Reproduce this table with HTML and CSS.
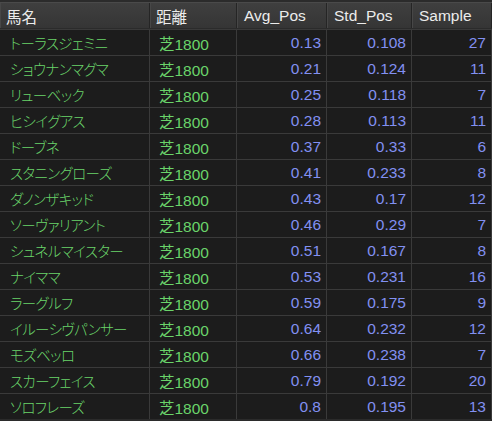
FILE: index.html
```html
<!DOCTYPE html>
<html lang="ja">
<head>
<meta charset="utf-8">
<link rel="stylesheet" href="styles.css">
</head>
<body>
<div class="grid">
  <div class="h">馬名</div><div class="h">距離</div><div class="h lat">Avg_Pos</div><div class="h lat">Std_Pos</div><div class="h lat">Sample</div>

  <div class="c name">トーラスジェミニ</div><div class="c dist">芝1800</div><div class="c num">0.13</div><div class="c num">0.108</div><div class="c num">27</div>
  <div class="c name">ショウナンマグマ</div><div class="c dist">芝1800</div><div class="c num">0.21</div><div class="c num">0.124</div><div class="c num">11</div>
  <div class="c name">リューベック</div><div class="c dist">芝1800</div><div class="c num">0.25</div><div class="c num">0.118</div><div class="c num">7</div>
  <div class="c name">ヒシイグアス</div><div class="c dist">芝1800</div><div class="c num">0.28</div><div class="c num">0.113</div><div class="c num">11</div>
  <div class="c name">ドーブネ</div><div class="c dist">芝1800</div><div class="c num">0.37</div><div class="c num">0.33</div><div class="c num">6</div>
  <div class="c name">スタニングローズ</div><div class="c dist">芝1800</div><div class="c num">0.41</div><div class="c num">0.233</div><div class="c num">8</div>
  <div class="c name">ダノンザキッド</div><div class="c dist">芝1800</div><div class="c num">0.43</div><div class="c num">0.17</div><div class="c num">12</div>
  <div class="c name">ソーヴァリアント</div><div class="c dist">芝1800</div><div class="c num">0.46</div><div class="c num">0.29</div><div class="c num">7</div>
  <div class="c name">シュネルマイスター</div><div class="c dist">芝1800</div><div class="c num">0.51</div><div class="c num">0.167</div><div class="c num">8</div>
  <div class="c name">ナイママ</div><div class="c dist">芝1800</div><div class="c num">0.53</div><div class="c num">0.231</div><div class="c num">16</div>
  <div class="c name">ラーグルフ</div><div class="c dist">芝1800</div><div class="c num">0.59</div><div class="c num">0.175</div><div class="c num">9</div>
  <div class="c name">イルーシヴパンサー</div><div class="c dist">芝1800</div><div class="c num">0.64</div><div class="c num">0.232</div><div class="c num">12</div>
  <div class="c name">モズベッロ</div><div class="c dist">芝1800</div><div class="c num">0.66</div><div class="c num">0.238</div><div class="c num">7</div>
  <div class="c name">スカーフェイス</div><div class="c dist">芝1800</div><div class="c num">0.79</div><div class="c num">0.192</div><div class="c num">20</div>
  <div class="c name">ソロフレーズ</div><div class="c dist">芝1800</div><div class="c num">0.8</div><div class="c num">0.195</div><div class="c num">13</div>
</div>
</body>
</html>
```
FILE: styles.css
```css
html, body {
  margin: 0;
  padding: 0;
  background: #2b2b2b;
}
body {
  padding-top: 2px;
  font-family: "Liberation Sans", "Noto Sans CJK JP", sans-serif;
}
.grid {
  display: grid;
  grid-template-columns: 150px 87px 90px 85px 80px;
  grid-auto-rows: 26px;
  width: 492px;
  border-top: 1px solid #4a4a4a;
}
.h {
  background: linear-gradient(#3f3f3f, #353535);
  color: #ececec;
  font-size: 15.5px;
  font-family: "Noto Sans CJK JP", sans-serif;
  padding-left: 6px;
  display: flex;
  align-items: center;
  border-right: 1px solid #252525;
  box-shadow: inset 1px 0 0 #474747;
  height: 25px;
}
.h.lat {
  font-family: "Liberation Sans", sans-serif;
  padding-left: 7px;
}
.c {
  background: #1c1c1c;
  border-right: 1px solid #3a3a3a;
  border-top: 1px solid #3a3a3a;
  display: flex;
  align-items: center;
  font-size: 15.5px;
}
.name {
  color: #6ad46a;
  font-family: "Noto Sans CJK JP", sans-serif;
  font-feature-settings: "palt";
  padding-left: 10px;
  font-size: 14.5px;
  letter-spacing: -0.6px;
  font-weight: 300;
}
.dist {
  color: #6ad46a;
  padding-left: 9px;
  font-family: "Liberation Sans", "Noto Sans CJK JP", sans-serif;
}
.num {
  color: #8290f2;
  justify-content: flex-end;
  padding-right: 5px;
}
```
